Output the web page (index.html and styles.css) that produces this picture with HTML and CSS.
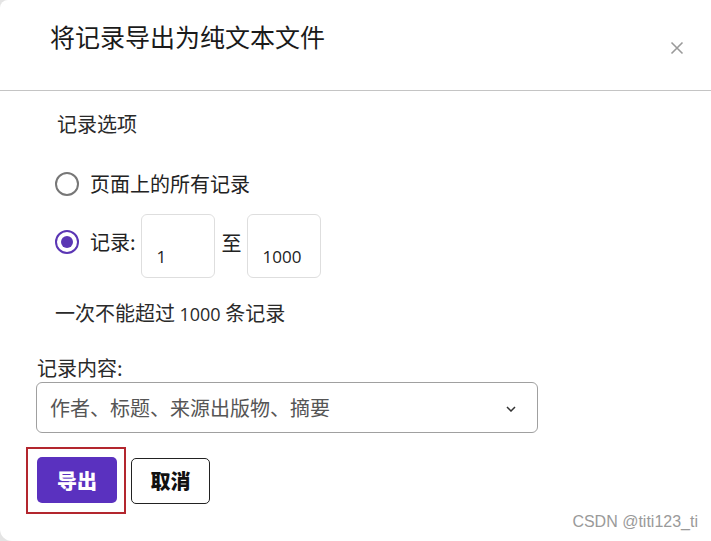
FILE: index.html
```html
<!DOCTYPE html>
<html lang="zh">
<head>
<meta charset="utf-8">
<title>将记录导出为纯文本文件</title>
<link rel="stylesheet" href="styles.css">
</head>
<body>
<div class="dialog">
  <div class="header">
    <h1 class="title">将记录导出为纯文本文件</h1>
    <button class="close" aria-label="关闭">
      <svg width="14" height="14" viewBox="0 0 14 14"><path d="M1.5 1.5 L12.5 12.5 M12.5 1.5 L1.5 12.5" stroke="#9a9a9a" stroke-width="1.6" fill="none"/></svg>
    </button>
  </div>
  <div class="body">
    <div class="section-label">记录选项</div>
    <div class="radio-row">
      <span class="radio"></span>
      <span class="radio-text">页面上的所有记录</span>
    </div>
    <div class="radio-row range-row">
      <span class="radio checked"><span class="dot"></span></span>
      <span class="radio-text">记录:</span>
      <div class="num-box first">1</div>
      <span class="to">至</span>
      <div class="num-box">1000</div>
    </div>
    <div class="note">一次不能超过 <span class="digits">1000</span> 条记录</div>
    <div class="content-label">记录内容:</div>
    <div class="select">
      <span class="select-text">作者、标题、来源出版物、摘要</span>
      <svg class="chev" width="10" height="6" viewBox="0 0 10 6"><path d="M1 1 L5 5 L9 1" stroke="#333" stroke-width="1.5" fill="none"/></svg>
    </div>
    <div class="actions">
      <div class="highlight"><button class="btn primary">导出</button></div>
      <button class="btn secondary">取消</button>
    </div>
  </div>
  <div class="watermark">CSDN @titi123_ti</div>
</div>
</body>
</html>
```
FILE: styles.css
```css
html, body {
  margin: 0;
  padding: 0;
  background: #e4e4e4;
}
body {
  font-family: "Noto Sans CJK SC", "Noto Sans", sans-serif;
  color: #222;
}
.dialog {
  position: relative;
  width: 711px;
  height: 541px;
  background: #fff;
  border-radius: 8px 0 0 12px;
  overflow: hidden;
}
.header {
  border-bottom: 1px solid #c4c4c4;
  display: flex;
  justify-content: space-between;
  padding-left: 50px;
  padding-right: 27px;
  box-sizing: border-box;
  height: 91px;
}
.title {
  margin: 18px 0 0 0;
  font-size: 25px;
  line-height: 36px;
  font-weight: 400;
  color: #1a1a1a;
}
.close {
  align-self: center;
  margin-top: 6px;
  border: 0;
  background: none;
  padding: 0;
  width: 14px;
  height: 14px;
  display: flex;
}
.body {
  font-size: 20px;
  line-height: 28px;
}
.section-label {
  margin: 19px 0 0 57px;
  color: #2a2a2a;
}
.radio-row {
  display: flex;
  align-items: center;
  margin: 32px 0 0 55px;
}
.radio {
  width: 24px;
  height: 24px;
  box-sizing: border-box;
  border: 2px solid #777;
  border-radius: 50%;
  display: flex;
  align-items: center;
  justify-content: center;
  flex: none;
}
.radio.checked {
  border-color: #5b36b4;
}
.dot {
  width: 12px;
  height: 12px;
  border-radius: 50%;
  background: #5b36b4;
}
.radio-text {
  margin-left: 11px;
  color: #222;
}
.range-row {
  margin-top: 16px;
  align-items: flex-start;
}
.range-row .radio {
  margin-top: 16px;
}
.range-row .radio-text {
  margin-top: 14px;
}
.num-box {
  width: 74px;
  height: 64px;
  box-sizing: border-box;
  border: 1px solid #dedede;
  border-radius: 6px;
  padding: 28px 0 0 15px;
  font-family: "Open Sans", "Noto Sans", sans-serif;
  font-size: 17px;
  line-height: 28px;
  color: #222;
}
.num-box.first {
  margin-left: 5px;
}
.to {
  margin: 15px 5px 0 7px;
}
.note {
  margin: 21px 0 0 55px;
  color: #2a2a2a;
}
.digits {
  font-family: "Open Sans", "Noto Sans", sans-serif;
  font-size: 18px;
}
.content-label {
  margin: 26px 0 0 37px;
  color: #2a2a2a;
}
.select {
  margin: 0 0 0 36px;
  width: 502px;
  height: 51px;
  box-sizing: border-box;
  border: 1px solid #a0a0a0;
  border-radius: 6px;
  display: flex;
  align-items: center;
  justify-content: space-between;
  padding: 0 21px 0 13px;
}
.select-text {
  color: #555;
}
.chev {
  margin-top: 2px;
}
.actions {
  display: flex;
  align-items: center;
  margin: 14px 0 0 26px;
  gap: 5px;
}
.highlight {
  border: 2px solid #b3262e;
  padding: 8px 7px 9px 9px;
  display: flex;
}
.btn {
  height: 46px;
  border-radius: 5px;
  font-family: "Noto Sans CJK SC", sans-serif;
  font-size: 20px;
  font-weight: 900;
  padding: 0;
  cursor: pointer;
}
.primary {
  width: 80px;
  background: #5a31bf;
  color: #fff;
  border: 0;
}
.secondary {
  width: 79px;
  background: #fff;
  color: #111;
  border: 1px solid #222;
}
.watermark {
  position: absolute;
  right: 13px;
  bottom: 10px;
  font-family: "Liberation Sans", sans-serif;
  font-size: 16px;
  color: #9a9a9a;
}
```
